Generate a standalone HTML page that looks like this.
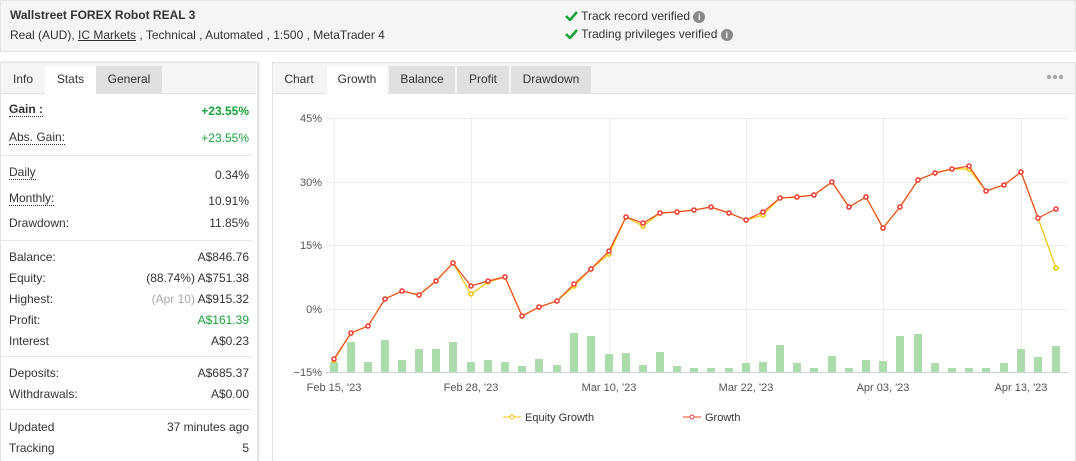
<!DOCTYPE html><html><head><style>
body{margin:0;width:1076px;height:460px;background:#fff;font-family:"Liberation Sans",sans-serif;font-size:12px;color:#333;position:relative;overflow:hidden}
.a{position:absolute;white-space:nowrap}
.r{position:absolute;right:8px;text-align:right}
.l{position:absolute;left:9px}
.dot{border-bottom:1px dotted #333}
.sep{position:absolute;left:0;width:252px;height:1px;background:#e6e6e6}
.g{color:#1aa33a}
.tab{position:absolute;top:66px;height:27px;line-height:27px;text-align:center;font-size:12px}
</style></head><body>
<div class="a" style="left:0;top:0;width:1074px;height:50px;background:#f5f5f5;border:1px solid #e2e2e2"></div>
<div class="a" style="left:10px;top:8px;font-weight:bold;font-size:12px">Wallstreet FOREX Robot REAL 3</div>
<div class="a" style="left:10px;top:28px">Real (AUD), <u>IC Markets</u> , Technical , Automated , 1:500 , MetaTrader 4</div>
<div class="a" style="left:565px;top:9px"><svg width="13" height="11" style="vertical-align:-1px"><path d="M1 6 L5 10 L12 2" fill="none" stroke="#1aa33a" stroke-width="2.6"/></svg> Track record verified <span style="display:inline-block;width:12px;height:12px;border-radius:6px;background:#888;color:#fff;font-size:9px;text-align:center;line-height:12px;font-weight:bold">i</span></div>
<div class="a" style="left:565px;top:27px"><svg width="13" height="11" style="vertical-align:-1px"><path d="M1 6 L5 10 L12 2" fill="none" stroke="#1aa33a" stroke-width="2.6"/></svg> Trading privileges verified <span style="display:inline-block;width:12px;height:12px;border-radius:6px;background:#888;color:#fff;font-size:9px;text-align:center;line-height:12px;font-weight:bold">i</span></div>

<div class="a" style="left:0;top:62px;width:256px;height:398px;border:1px solid #e2e2e2;border-bottom:none;box-shadow:1px 0 2px #ddd"></div>
<div class="a" style="left:1px;top:63px;width:255px;height:30px;background:#f5f5f5;border-bottom:1px solid #e2e2e2"></div>
<div class="tab" style="left:1px;width:44px">Info</div>
<div class="tab" style="left:45px;width:51px;background:#fff;height:28px">Stats</div>
<div class="tab" style="left:96px;width:66px;background:#e0e0e0">General</div>
<div class="a" style="left:0;top:100px;width:257px;height:360px">
<div class="l" style="top:2px;font-weight:bold"><span class="dot">Gain :</span></div><div class="r g" style="top:4px;font-weight:bold">+23.55%</div>
<div class="l" style="top:30px"><span class="dot">Abs. Gain:</span></div><div class="r g" style="top:31px">+23.55%</div>
<div class="sep" style="top:55px"></div>
<div class="l" style="top:65px"><span class="dot">Daily</span></div><div class="r" style="top:68px">0.34%</div>
<div class="l" style="top:91px"><span class="dot">Monthly:</span></div><div class="r" style="top:94px">10.91%</div>
<div class="l" style="top:116px">Drawdown:</div><div class="r" style="top:116px">11.85%</div>
<div class="sep" style="top:140px"></div>
<div class="l" style="top:150px">Balance:</div><div class="r" style="top:150px">A$846.76</div>
<div class="l" style="top:171px">Equity:</div><div class="r" style="top:171px">(88.74%) A$751.38</div>
<div class="l" style="top:192px">Highest:</div><div class="r" style="top:192px"><span style="color:#aaa">(Apr 10)</span> A$915.32</div>
<div class="l" style="top:213px">Profit:</div><div class="r g" style="top:213px">A$161.39</div>
<div class="l" style="top:234px">Interest</div><div class="r" style="top:234px">A$0.23</div>
<div class="sep" style="top:256px"></div>
<div class="l" style="top:266px">Deposits:</div><div class="r" style="top:266px">A$685.37</div>
<div class="l" style="top:287px">Withdrawals:</div><div class="r" style="top:287px">A$0.00</div>
<div class="sep" style="top:309px"></div>
<div class="l" style="top:320px">Updated</div><div class="r" style="top:320px">37 minutes ago</div>
<div class="l" style="top:341px">Tracking</div><div class="r" style="top:341px">5</div>
</div>

<div class="a" style="left:272px;top:62px;width:802px;height:398px;border:1px solid #e2e2e2;border-bottom:none"></div>
<div class="a" style="left:273px;top:63px;width:802px;height:30px;background:#f5f5f5;border-bottom:1px solid #e2e2e2"></div>
<div class="tab" style="left:273px;width:52px">Chart</div>
<div class="tab" style="left:327px;width:60px;background:#fff;height:28px">Growth</div>
<div class="tab" style="left:389px;width:66px;background:#e0e0e0">Balance</div>
<div class="tab" style="left:457px;width:52px;background:#e0e0e0">Profit</div>
<div class="tab" style="left:511px;width:80px;background:#e0e0e0">Drawdown</div>
<svg class="a" style="left:1046px;top:74px" width="18" height="6"><circle cx="3" cy="3" r="2.2" fill="#aaa"/><circle cx="9" cy="3" r="2.2" fill="#aaa"/><circle cx="15" cy="3" r="2.2" fill="#aaa"/></svg>

<svg class="a" style="left:0;top:0" width="1076" height="460">
<defs><marker id="m" markerWidth="6" markerHeight="6" refX="3" refY="3" markerUnits="userSpaceOnUse"><circle cx="3" cy="3" r="2" fill="#fff" stroke="#f03c3c" stroke-width="1.5"/></marker>
<marker id="my" markerWidth="6" markerHeight="6" refX="3" refY="3" markerUnits="userSpaceOnUse"><circle cx="3" cy="3" r="2" fill="#fff" stroke="#f5c400" stroke-width="1.5"/></marker></defs>
<g stroke="#ececec" stroke-width="1">
<line x1="326" y1="118.5" x2="1068" y2="118.5"/><line x1="326" y1="182.5" x2="1068" y2="182.5"/><line x1="326" y1="245.5" x2="1068" y2="245.5"/><line x1="326" y1="309.5" x2="1068" y2="309.5"/>
<line x1="334.5" y1="118" x2="334.5" y2="372"/><line x1="471.5" y1="118" x2="471.5" y2="372"/><line x1="609.5" y1="118" x2="609.5" y2="372"/><line x1="746.5" y1="118" x2="746.5" y2="372"/><line x1="883.5" y1="118" x2="883.5" y2="372"/><line x1="1021.5" y1="118" x2="1021.5" y2="372"/>
</g>
<line x1="326" y1="372.5" x2="1068" y2="372.5" stroke="#c8d0e0"/>
<g fill="#abdcab">
<rect x="330" y="362" width="8" height="10"/><rect x="347" y="342" width="8" height="30"/><rect x="364" y="362" width="8" height="10"/><rect x="381" y="340" width="8" height="32"/><rect x="398" y="360" width="8" height="12"/><rect x="415" y="349" width="8" height="23"/><rect x="432" y="349" width="8" height="23"/><rect x="449" y="342" width="8" height="30"/><rect x="467" y="362" width="8" height="10"/><rect x="484" y="360" width="8" height="12"/><rect x="501" y="362" width="8" height="10"/><rect x="518" y="366" width="8" height="6"/><rect x="535" y="359" width="8" height="13"/><rect x="553" y="365" width="8" height="7"/><rect x="570" y="333" width="8" height="39"/><rect x="587" y="336" width="8" height="36"/><rect x="605" y="354" width="8" height="18"/><rect x="622" y="353" width="8" height="19"/><rect x="639" y="365" width="8" height="7"/><rect x="656" y="352" width="8" height="20"/><rect x="673" y="366" width="8" height="6"/><rect x="690" y="368" width="8" height="4"/><rect x="707" y="368" width="8" height="4"/><rect x="725" y="368" width="8" height="4"/><rect x="742" y="363" width="8" height="9"/><rect x="759" y="362" width="8" height="10"/><rect x="776" y="345" width="8" height="27"/><rect x="793" y="363" width="8" height="9"/><rect x="810" y="368" width="8" height="4"/><rect x="828" y="356" width="8" height="16"/><rect x="845" y="368" width="8" height="4"/><rect x="862" y="360" width="8" height="12"/><rect x="879" y="361" width="8" height="11"/><rect x="896" y="336" width="8" height="36"/><rect x="914" y="334" width="8" height="38"/><rect x="931" y="363" width="8" height="9"/><rect x="948" y="368" width="8" height="4"/><rect x="965" y="368" width="8" height="4"/><rect x="982" y="368" width="8" height="4"/><rect x="1000" y="363" width="8" height="9"/><rect x="1017" y="349" width="8" height="23"/><rect x="1034" y="357" width="8" height="15"/><rect x="1052" y="346" width="8" height="26"/>
</g>
<polyline fill="none" stroke="#f5c400" stroke-width="1.2" marker-start="url(#my)" marker-mid="url(#my)" marker-end="url(#my)" points="334,360 351,333 368,326 385,299 402,291 419,295 436,281 453,263 471,294 488,282 505,277 522,316 539,307 557,301 574,286 591,269 609,254 626,217 643,226 660,213 677,212 694,210 711,207 729,213 746,220 763,215 780,198 797,197 814,195 832,182 849,207 866,197 883,228 900,207 918,180 935,173 952,169 969,169 986,191 1004,185 1021,172 1038,218 1056,268"/>
<polyline fill="none" stroke="#f04a1a" stroke-width="1.2" marker-start="url(#m)" marker-mid="url(#m)" marker-end="url(#m)" points="334,359 351,333 368,326 385,299 402,291 419,295 436,281 453,263 471,286 488,281 505,277 522,316 539,307 557,301 574,284 591,269 609,251 626,217 643,223 660,213 677,212 694,210 711,207 729,213 746,220 763,212 780,198 797,197 814,195 832,182 849,207 866,197 883,228 900,207 918,180 935,173 952,169 969,166 986,191 1004,185 1021,172 1038,218 1056,209"/>
<g font-family="Liberation Sans,sans-serif" font-size="11" fill="#555" text-anchor="end">
<text x="322" y="122">45%</text><text x="322" y="186">30%</text><text x="322" y="249">15%</text><text x="322" y="313">0%</text><text x="322" y="376">−15%</text></g>
<g font-family="Liberation Sans,sans-serif" font-size="11" fill="#555" text-anchor="middle">
<text x="334" y="391">Feb 15, '23</text><text x="471" y="391">Feb 28, '23</text><text x="609" y="391">Mar 10, '23</text><text x="746" y="391">Mar 22, '23</text><text x="883" y="391">Apr 03, '23</text><text x="1021" y="391">Apr 13, '23</text></g>
<line x1="503" y1="417" x2="521" y2="417" stroke="#f5c400"/><circle cx="512" cy="417" r="2" fill="#fff" stroke="#f5c400"/>
<text x="525" y="421" font-family="Liberation Sans,sans-serif" font-size="11" fill="#333">Equity Growth</text>
<line x1="683" y1="417" x2="701" y2="417" stroke="#f04a1a"/><circle cx="692" cy="417" r="2" fill="#fff" stroke="#f03c3c"/>
<text x="705" y="421" font-family="Liberation Sans,sans-serif" font-size="11" fill="#333">Growth</text>
</svg>
</body></html>
